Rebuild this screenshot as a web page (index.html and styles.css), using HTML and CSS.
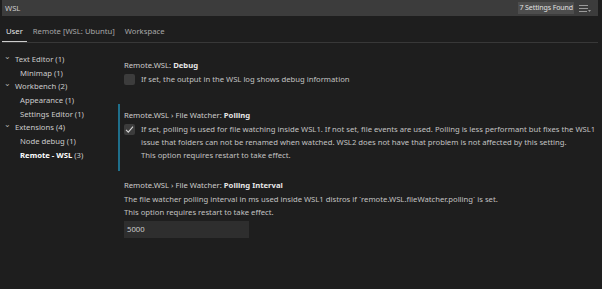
FILE: index.html
```html
<html>
<head>
<link rel="stylesheet" href="styles.css">
</head>
<body>
<div class="search">
  <span class="query">WSL</span>
  <span class="found">7 Settings Found</span>
  <svg class="filter" width="12" height="9" viewBox="0 0 12 9">
    <rect x="0" y="1" width="9" height="1" fill="#9a9a9a"/>
    <rect x="0" y="4" width="9" height="1" fill="#9a9a9a"/>
    <rect x="0" y="7" width="8" height="1" fill="#9a9a9a"/>
    <path d="M9 6 L12 6 L10.5 8 Z" fill="#9a9a9a"/>
  </svg>
</div>

<div class="tabs">
  <span class="tab active">User</span>
  <span class="tab">Remote [WSL: Ubuntu]</span>
  <span class="tab">Workspace</span>
</div>

<div class="main">
  <div class="tree">
    <div class="node"><span class="chev">&#8964;</span>Text Editor (1)</div>
    <div class="leaf">Minimap (1)</div>
    <div class="node"><span class="chev">&#8964;</span>Workbench (2)</div>
    <div class="leaf">Appearance (1)</div>
    <div class="leaf">Settings Editor (1)</div>
    <div class="node"><span class="chev">&#8964;</span>Extensions (4)</div>
    <div class="leaf">Node debug (1)</div>
    <div class="leaf current"><b>Remote - WSL</b> (3)</div>
  </div>

  <div class="list">
    <div class="item first">
      <div class="title">Remote.WSL: <b>Debug</b></div>
      <div class="row">
        <span class="box"></span>
        <span class="desc">If set, the output in the WSL log shows debug information</span>
      </div>
    </div>

    <div class="item focused">
      <div class="title">Remote.WSL &#8250; File Watcher: <b>Polling</b></div>
      <div class="row">
        <span class="box">
          <svg width="11" height="11" viewBox="0 0 11 11"><path d="M2 5.8 L4.3 8.2 L9 2.6" stroke="#d4d4d4" stroke-width="1.1" fill="none"/></svg>
        </span>
        <span class="desc">If set, polling is used for file watching inside WSL1. If not set, file events are used. Polling is less performant but fixes the WSL1 issue that folders can not be renamed when watched. WSL2 does not have that problem is not affected by this setting.<br>This option requires restart to take effect.</span>
      </div>
    </div>

    <div class="item">
      <div class="title">Remote.WSL &#8250; File Watcher: <b>Polling Interval</b></div>
      <div class="desc">The file watcher polling interval in ms used inside WSL1 distros if `remote.WSL.fileWatcher.polling` is set.<br>This option requires restart to take effect.</div>
      <div class="input">5000</div>
    </div>
  </div>
</div>
</body>
</html>
```

FILE: styles.css
```css
body
{
margin:0;
background-color:#1e1e1e;
color:#cccccc;
font-family:"Noto Sans", "Open Sans", sans-serif;
font-size:7.7px;
}
.search
{
margin:0 4px 0 2px;
height:16px;
background-color:#3c3c3c;
display:flex;
align-items:center;
padding-left:3px;
}
.query
{
color:#cccccc;
flex:1;
}
.found
{
background-color:#4d4d4d;
color:#e0e0e0;
padding:1px 1px;
line-height:10px;
font-size:7px;
letter-spacing:-0.1px;
}
.filter
{
margin:0 7px 0 5px;
}
.tabs
{
margin:0 4px 0 2px;
height:26px;
display:flex;
align-items:flex-end;
gap:2px;
border-bottom:1px solid #383838;
}
.tab
{
color:#a8a8a8;
padding:0 4px 5px 4px;
line-height:11px;
}
.tab.active
{
color:#e7e7e7;
padding-bottom:4px;
border-bottom:1px solid #cccccc;
}
.main
{
display:flex;
}
.tree
{
width:118px;
padding-top:10px;
}
.node, .leaf
{
height:13.7px;
line-height:13.7px;
white-space:nowrap;
}
.node
{
padding-left:4px;
}
.chev
{
display:inline-block;
width:11px;
color:#b0b0b0;
position:relative;
top:-3px;
}
.leaf
{
padding-left:20px;
}
.current b
{
color:#ffffff;
}
.list
{
flex:1;
min-width:0;
padding-top:11px;
}
.item
{
padding:5px 0 12px 4px;
border-left:2px solid transparent;
}
.item.first
{
padding-bottom:18px;
}
.item.focused
{
border-left-color:#1f6f8b;
padding-bottom:9px;
margin-bottom:3px;
}
.title
{
color:#cccccc;
line-height:12px;
margin-bottom:2px;
}
.title b
{
color:#e7e7e7;
}
.row
{
display:flex;
align-items:flex-start;
}
.box
{
flex:none;
width:11px;
height:11px;
background-color:#3c3c3c;
border-radius:2px;
margin:1px 6px 0 0;
}
.box svg
{
display:block;
}
.desc
{
color:#c2c2c2;
line-height:13px;
}
.input
{
margin-top:2px;
width:122px;
height:17px;
line-height:17px;
background-color:#2e2e2e;
padding-left:3px;
color:#cccccc;
}
```
